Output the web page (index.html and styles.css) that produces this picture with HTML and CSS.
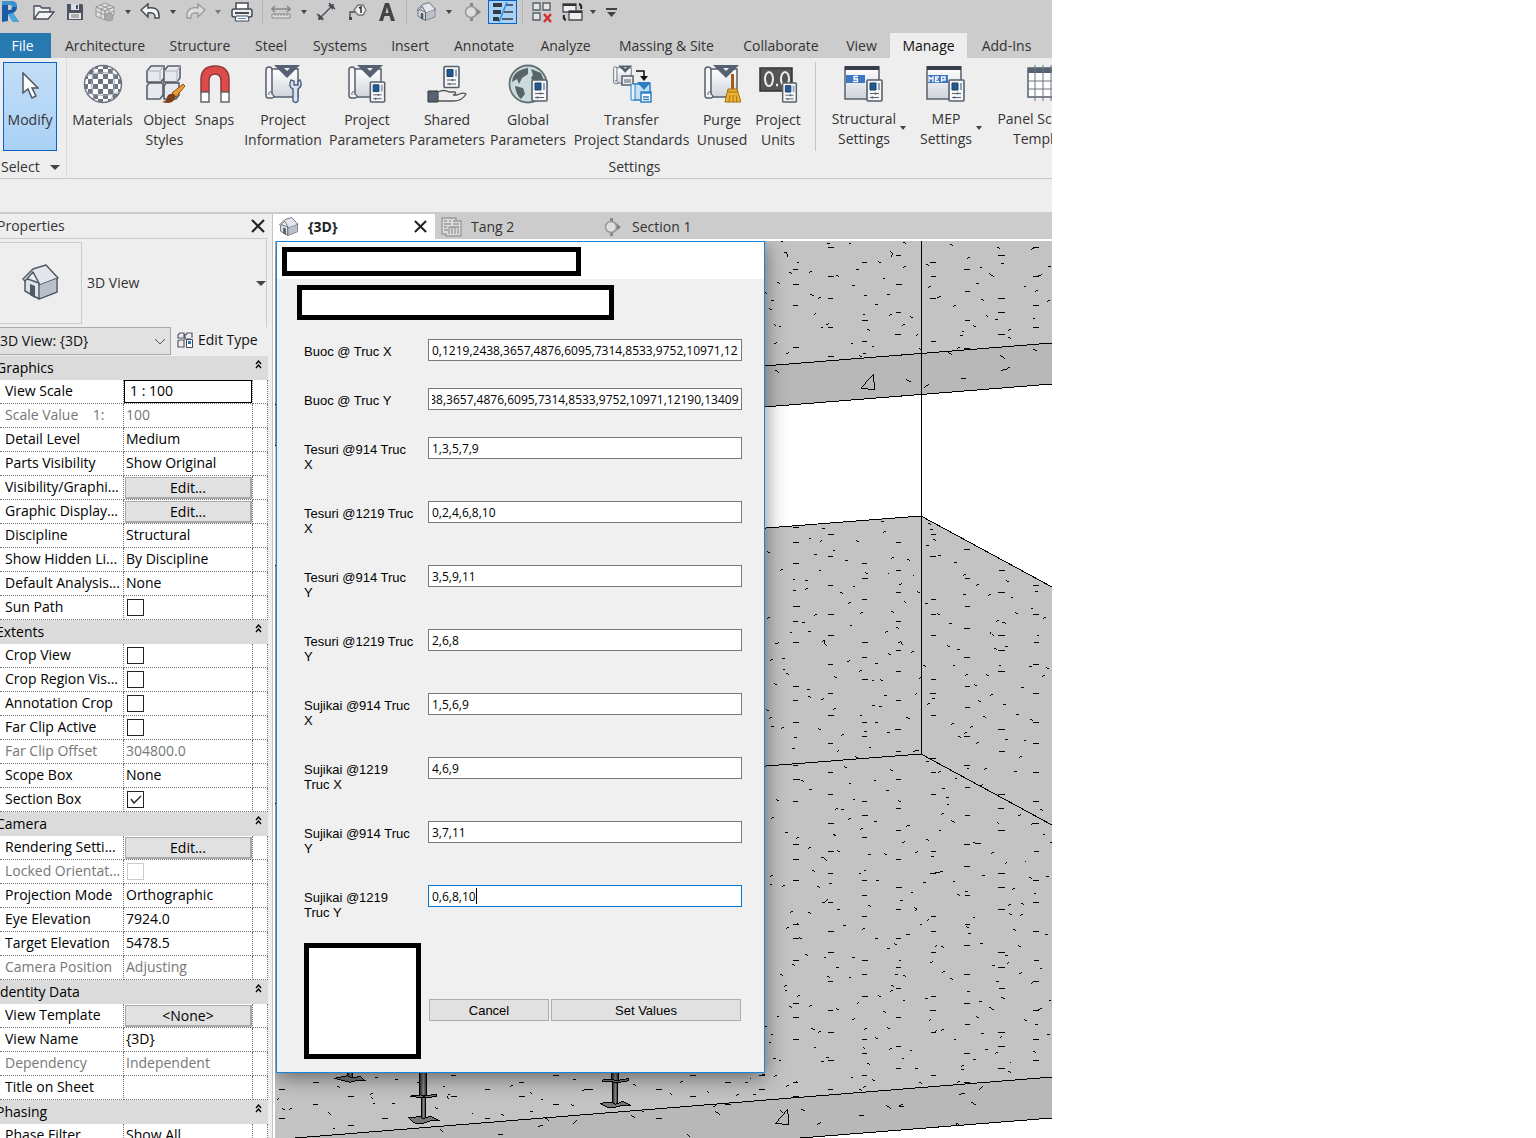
FILE: index.html
```html
<!DOCTYPE html>
<html lang="en">
<head>
<meta charset="utf-8">
<title>3D View</title>
<link rel="stylesheet" href="styles.css">
</head>
<body>
<svg class="defs" aria-hidden="true">
  <defs>
    <linearGradient id="paper" x1="0" y1="0" x2="0" y2="1"><stop offset="0" stop-color="#fff"/><stop offset="1" stop-color="#cfd4db"/></linearGradient>
    <linearGradient id="post"><stop offset="0" stop-color="#222"/><stop offset=".5" stop-color="#888"/><stop offset="1" stop-color="#222"/></linearGradient>
    <pattern id="checks" width="10" height="10" patternUnits="userSpaceOnUse"><rect width="10" height="10" fill="#fff"/><path d="M0 0h5v5H0zM5 5h5v5H5z" fill="#6b7480"/></pattern>
    <symbol id="sheet" viewBox="0 0 17 23"><rect x="1" y="1" width="15" height="21" rx="1" fill="#f4f6f8" stroke="#57606c" stroke-width="1.6"/><path d="M4 4h6v7H4z" fill="#1d5b96" stroke="#23405f"/><path d="M12 4h2v7h-2z" fill="#8fa6bd"/><path d="M4 14.500h9M4 18.500h9" stroke="#57606c"/><path d="M9.500 13.500v2M6.500 17.500v2" stroke="#57606c" stroke-width="1.500"/></symbol>
    <symbol id="scroll" viewBox="0 0 38 40"><path d="M7 5h27v28H7z" fill="url(#paper)" stroke="#57606c" stroke-width="1.500"/><path d="M2 6q0-3 3-3t3 3v24q4 3 0 4H4q-2 0-2-3z" fill="#f4f6f8" stroke="#57606c" stroke-width="1.500"/><path d="M8 28q-4-1-3 3" fill="none" stroke="#57606c"/><path d="M10 1h26L23 14z" fill="#566273"/><path d="M20 4h6l-3 3z" fill="#eee"/></symbol>
    <symbol id="house" viewBox="0 0 38 38"><path d="M3 14v13l14 8V19zM17 19v16l18-7V13z" fill="#dfe3e8" stroke="#515966" stroke-width="1.500" stroke-linejoin="round"/><path d="M1 15 11 5l13-4 12 13-18 7-7-13-8 9z" fill="#e3e6ea" stroke="#515966" stroke-width="1.500" stroke-linejoin="round"/><path d="M8 20v11l5 3V22z" fill="#515966"/><path d="m18 21 16-6v12l-16 7z" fill="#b9c0ca"/></symbol>
    <symbol id="section" viewBox="0 0 18 18"><path d="M7 0h3v18H7z" fill="#888"/><path d="m9 2 9 7-9 7z" fill="#808080"/><circle cx="8" cy="9" r="5.500" fill="#ddd" stroke="#999" stroke-width="1.500"/></symbol>
    <symbol id="window" viewBox="0 0 38 40"><path d="M1 3h34v32H1z" fill="url(#paper)" stroke="#57606c" stroke-width="1.500"/><path d="M1 2h34v4H1z" fill="#363d48"/></symbol>
    <symbol id="chevrons" viewBox="0 0 7 9"><path d="m1 4 2.500-3L6 4M1 8l2.500-3L6 8" fill="none" stroke="#000" stroke-width="1.300"/></symbol>
  </defs>
</svg>
<div class="app">
  <header>
    <div class="quick-bar">
      <button class="logo" aria-label="Application menu"><svg width="20" height="24" viewBox="0 0 20 24"><path d="M2 1h9q6 0 6 6 0 4-4 6l6 9h-6L8 14v7l-6 1z" fill="#1c5aa6"/><path d="M2 1h9q6 0 6 6H8V5H2z" fill="#3f92d2"/><path d="M8 5h2q2 0 2 2.500T10 10H8z" fill="#ccc"/><path d="m8 14 5 8h6l-6-9z" fill="#4aa5dd"/></svg></button>
      <button aria-label="Open"><svg width="22" height="18" viewBox="0 0 22 18"><path d="M1 16V3h6l2 2h8v4" fill="#eee" stroke="#444b56" stroke-width="1.300"/><path d="m1 16 5-7h15l-6 7z" fill="#f5f5f5" stroke="#444b56" stroke-width="1.300"/></svg></button>
      <button aria-label="Save"><svg width="18" height="18" viewBox="0 0 18 18"><path d="M1 1h15l1 1v15H1z" fill="#4d5562"/><path d="M5 1h8v6H5z" fill="#dde"/><path d="M10 2h2v4h-2z" fill="#4d5562"/><path d="M3 10h12v6H3z" fill="#e8e8e8"/><path d="M5 12h8M5 14h8" stroke="#777"/></svg></button>
      <button aria-label="Synchronize"><svg width="20" height="20" viewBox="0 0 20 20" fill="#ddd" stroke="#999"><path d="m1 5 9-4 9 4-9 4zM1 5v9l9 4V9zM19 5v8l-9 5V9zM5 3l9 4v9M15 3 6 7v9M1 9l9 4 9-4"/><circle cx="14" cy="15" r="4" fill="#aaa"/></svg></button>
      <button aria-label="Synchronize options"><span class="caret"></span></button>
      <button aria-label="Undo"><svg width="20" height="18" viewBox="0 0 20 18"><path d="m1 7 7-6v4q12-2 11 10h-4q1-6-7-5v4z" fill="#f6f6f6" stroke="#444b56" stroke-width="1.500"/></svg></button>
      <button aria-label="Undo list"><span class="caret"></span></button>
      <button aria-label="Redo"><svg width="20" height="18" viewBox="0 0 20 18"><path d="m19 7-7-6v4Q0 3 1 15h4q-1-6 7-5v4z" fill="#ddd" stroke="#999" stroke-width="1.300"/></svg></button>
      <button aria-label="Redo list"><span class="caret dim"></span></button>
      <button aria-label="Print"><svg width="22" height="20" viewBox="0 0 22 20"><path d="M5 1h12v7H5z" fill="#fff" stroke="#444b56" stroke-width="1.500"/><rect x="1" y="7" width="20" height="8" rx="2" fill="#eee" stroke="#444b56" stroke-width="1.500"/><path d="M4 11h14" stroke="#444b56" stroke-width="2"/><path d="M5 14h12l1 5H4z" fill="#fff" stroke="#444b56"/><path d="M7 16.500h8" stroke="#4a97cc"/></svg></button>
      <span class="rule"></span>
      <button aria-label="Measure"><svg width="20" height="14" viewBox="0 0 20 14"><path d="M1 4h18M4 1 1 4l3 3m12-6 3 3-3 3" fill="none" stroke="#888" stroke-width="1.600"/><path d="M1 9h18v4H1z" fill="#ddd" stroke="#888"/><path d="M4 9v2m3-2v2m3-2v2m3-2v2m3-2v2" stroke="#888"/></svg></button>
      <button aria-label="Measure options"><span class="caret"></span></button>
      <button aria-label="Aligned dimension"><svg width="20" height="20" viewBox="0 0 20 20"><path d="M4 16 16 4M1 12l6 6M13 1l6 6" stroke="#444b56" stroke-width="1.300"/><path d="m2 18 1-6 5 5zM18 2l-1 6-5-5z" fill="#444b56"/></svg></button>
      <button aria-label="Tag by category"><svg width="19" height="18" viewBox="0 0 19 18"><path d="M2 15V9h5" fill="none" stroke="#444b56" stroke-width="1.300"/><path d="M1 14h3v3H1z" fill="#444b56"/><path d="m6 7 4-5h5l3 5-3 5h-5z" fill="#eee" stroke="#777" stroke-width="1.300"/><path d="m11 5 2-1v6" fill="none" stroke="#333" stroke-width="1.500"/></svg></button>
      <button aria-label="Text"><svg width="16" height="20" viewBox="0 0 16 20"><path d="M0 19 6 1h4l6 18h-4l-1.500-5H5.500L4 19zM6.500 11h3L8 5z" fill="#444" fill-rule="evenodd"/></svg></button>
      <span class="rule"></span>
      <button aria-label="Default 3D view"><svg width="21" height="20"><use href="#house"/></svg></button>
      <button aria-label="3D view options"><span class="caret"></span></button>
      <button aria-label="Section"><svg width="18" height="18"><use href="#section"/></svg></button>
      <button class="on" aria-label="Thin lines"><svg width="22" height="20" viewBox="0 0 22 20"><path d="M1 3h9M1 10h8M1 17h6" stroke="#333b47" stroke-width="4"/><path d="M13 3h8M12 10h9M10 17h11" stroke="#333b47" stroke-width="1.300"/><path d="M15 0 7 20" stroke="#2f8fe8" stroke-width="1.500"/></svg></button>
      <span class="rule"></span>
      <button aria-label="Close inactive views"><svg width="20" height="21" viewBox="0 0 20 21"><path d="M1 1h7v7H1zM11 1h7v7h-7zM1 11h7v7H1z" fill="#e4e4e4" stroke="#555d69" stroke-width="1.300"/><path d="m12 12 7 8m0-8-7 8" stroke="#d42f2f" stroke-width="2.500"/></svg></button>
      <button aria-label="Switch windows"><svg width="21" height="20" viewBox="0 0 21 20"><path d="M1 2h13v8H1zM7 9h13v9H7z" fill="#eee" stroke="#444b56" stroke-width="1.300"/><path d="M1 3h13M7 10h13" stroke="#333" stroke-width="2"/><path d="M17 2q3 1 2 5M4 18q-3-1-2-5" fill="none" stroke="#222" stroke-width="2"/></svg></button>
      <button aria-label="Window list"><span class="caret"></span></button>
      <button aria-label="Customize toolbar"><svg width="11" height="9" viewBox="0 0 11 9"><path d="M0 0h11v2H0zM1 4h9L5.500 9z" fill="#444"/></svg></button>
    </div>
    <nav class="tabs">
      <a class="file" href="#">File</a><a href="#">Architecture</a><a href="#">Structure</a><a href="#">Steel</a><a href="#">Systems</a><a href="#">Insert</a><a href="#">Annotate</a><a href="#">Analyze</a><a href="#">Massing &amp; Site</a><a href="#">Collaborate</a><a href="#">View</a><a class="current" href="#">Manage</a><a href="#">Add-Ins</a>
    </nav>
    <div class="ribbon">
      <section class="panel-select">
        <button class="modify"><svg width="18" height="28" viewBox="0 0 18 28"><path d="M2 1v20l5-4 4 9 4-2-4-8h6z" fill="#fff" stroke="#50565f" stroke-width="1.500"/></svg><span>Modify</span></button>
        <button class="select">Select <span class="caret wide"></span></button>
      </section>
      <section class="panel-settings">
        <div class="tools">
          <button><svg width="40" height="40" viewBox="0 0 40 40"><circle cx="20" cy="20" r="18.500" fill="url(#checks)" stroke="#6b7480" stroke-width="1.500"/><path d="M12 3q-7 17 0 34M28 3q7 17 0 34M3 12q17-7 34 0M3 28q17 7 34 0" fill="none" stroke="#9aa2ac"/></svg><span>Materials</span></button>
          <button><svg width="40" height="40" viewBox="0 0 40 40"><path d="m2 7 4-5h13v12l-3 4H2zM19 7l4-5h12v12l-3 4H19zM2 22l2-3h14v12l-3 4H2zM19 22l2-3h13v12l-3 4H19z" fill="#e7e9ee" stroke="#57606c" stroke-width="1.600"/><path d="M2 7h13v11M19 7h13v11M15 7l3-5M32 7l3-5" fill="none" stroke="#aab0b9"/><path d="m38 20-11 9 4 4 9-11z" fill="#e99a35" stroke="#8a5210"/><path d="M17 38q5-1 5-5 2-4 6-3 4 1 2 5-4 6-13 3z" fill="#7a431b"/></svg><span>Object<br>Styles</span></button>
          <button><svg width="32" height="40" viewBox="0 0 32 40"><path d="M2 28V16Q2 2 16 2t14 14v12h-8V17q0-7-6-7t-6 7v11z" fill="#df4b4b" stroke="#8c3b3b" stroke-width="1.500"/><path d="M2 28h8v10H2zM22 28h8v10h-8z" fill="#fff" stroke="#666" stroke-width="1.500"/></svg><span>Snaps</span></button>
          <button><svg width="38" height="40" viewBox="0 0 38 40"><use href="#scroll"/><path d="M27 16q-3 7 2 9v12q3 3 5 0V25q5-3 2-9l-2 1v4h-4v-4z" fill="#dde3ec" stroke="#4a5d84" stroke-width="1.400"/></svg><span>Project<br>Information</span></button>
          <button><svg width="40" height="40" viewBox="0 0 40 40"><use href="#scroll" width="38" height="40"/><use href="#sheet" x="22" y="17" width="17" height="22"/></svg><span>Project<br>Parameters</span></button>
          <button><svg width="40" height="40" viewBox="0 0 40 40"><use href="#sheet" x="16" y="1" width="17" height="24"/><path d="M1 27h10v11H1z" fill="#566273" stroke="#333"/><path d="M11 28q6-3 11 0h6q2 2-2 3h4q6-3 9-1-4 7-12 7H11z" fill="#eee" stroke="#555" stroke-width="1.300"/></svg><span>Shared<br>Parameters</span></button>
          <button><svg width="40" height="40" viewBox="0 0 40 40"><circle cx="20" cy="20" r="18.500" fill="#c9dbdc" stroke="#627276" stroke-width="1.800"/><path d="M20 4Q5 6 4 18l5-3 2 5 3-6 6-4zM7 22l8 2 2 6-4 5q-5-4-6-13zM23 5l10 4 4 10-7-3-3 4-4-6 2-3z" fill="#596469"/><use href="#sheet" x="23" y="15" width="17" height="23"/></svg><span>Global<br>Parameters</span></button>
          <button><svg width="40" height="40" viewBox="0 0 40 40"><use href="#scroll" x="0" y="1" width="22" height="22"/><path d="M10 12h11v9H10z" fill="#eee" stroke="#57606c" stroke-width="1.500"/><path d="M12 16h7M12 18h7" stroke="#57606c"/><path d="M24 7h8v7" fill="none" stroke="#111" stroke-width="1.500"/><path d="M28 12h8l-4 5z" fill="#111"/><path d="M22 20h16v16H22z" fill="#c3e0f5" stroke="#2d7fc1" stroke-width="1.500"/><path d="M19 20h4v16h-4z" fill="#e8f5ff" stroke="#2d7fc1"/><path d="M25 18h14l-7 8z" fill="#2d7fc1"/><path d="M29 28h10v10H29z" fill="#fff" stroke="#2d7fc1" stroke-width="1.500"/><path d="M29 29h10M31 33h6M31 35.500h6" stroke="#2d7fc1" stroke-width="1.500"/></svg><span>Transfer<br>Project Standards</span></button>
          <button><svg width="38" height="40" viewBox="0 0 38 40"><use href="#scroll"/><path d="M28 10h3v15h-3z" fill="#a35c16"/><path d="m25 25 9 0 4 13H22z" fill="#edb530" stroke="#a66b12"/><path d="M25 28h10M27 31l-1 7m4-7v7m3-7 1 7" stroke="#a66b12"/></svg><span>Purge<br>Unused</span></button>
          <button><svg width="40" height="40" viewBox="0 0 40 40"><path d="M2 4h32v23H2z" fill="#555" stroke="#333" stroke-width="1.500"/><ellipse cx="11" cy="15" rx="4" ry="7" fill="none" stroke="#eee" stroke-width="2"/><path d="M18 21h2" stroke="#eee" stroke-width="2.500"/><ellipse cx="27" cy="15" rx="4" ry="7" fill="none" stroke="#eee" stroke-width="2"/><use href="#sheet" x="23" y="18" width="17" height="21"/></svg><span>Project<br>Units</span></button>
          <span class="rule"></span>
          <button class="drop"><svg width="40" height="40" viewBox="0 0 40 40"><use href="#window" width="38" height="40"/><path d="M2 11h19v8H2z" fill="#3d76c4"/><path d="M14 12.500h-4V15h3.500v2.500H9" fill="none" stroke="#fff" stroke-width="1.300"/><use href="#sheet" x="22" y="15" width="17" height="23"/></svg><span>Structural<br>Settings</span><i class="caret"></i></button>
          <button class="drop"><svg width="40" height="40" viewBox="0 0 40 40"><use href="#window" width="38" height="40"/><path d="M2 11h20v8H2z" fill="#3d76c4"/><path d="M3 18v-5l2 2 2-2v5M13 13H9.500v4.500H13M9.500 15H12M15.500 18v-5H19v3h-3" fill="none" stroke="#fff" stroke-width="1.300"/><use href="#sheet" x="22" y="15" width="17" height="23"/></svg><span>MEP<br>Settings</span><i class="caret"></i></button>
          <button class="drop"><svg width="40" height="40" viewBox="0 0 40 40"><path d="M1 4h38v29H1z" fill="#fff" stroke="#57606c" stroke-width="1.500"/><path d="M1 4h38v5H1z" fill="#566273"/><path d="M8 1v36M16 1v36M24 1v36M32 1v36M1 17h38M1 25h38" stroke="#6d7580"/></svg><span>Panel Schedule<br>Templates</span><i class="caret"></i></button>
        </div>
        <h2>Settings</h2>
      </section>
    </div>
    <div class="options"></div>
  </header>
  <main>
    <aside class="properties">
      <div class="title"><h2>Properties</h2><button aria-label="Close properties"><svg width="14" height="14" viewBox="0 0 14 14"><path d="m1 1 12 12M13 1 1 13" stroke="#222" stroke-width="2.200"/></svg></button></div>
      <button class="type"><span class="thumb"><svg width="40" height="38"><use href="#house"/></svg></span><span>3D View</span><i class="caret wide"></i></button>
      <div class="instance"><select aria-label="View"><option>3D View: {3D}</option></select><button><svg width="16" height="17" viewBox="0 0 16 17"><path d="m1 3 2-2h4v5H1zM9 3l1-2h5v5M1 9l1-1h5v7H1zM1 6h6M8 2v5h6" fill="none" stroke="#515966" stroke-width="1.200"/><path d="M9.500 7.500h6v8h-6z" fill="#fff" stroke="#445"/><path d="M11 9h3v3h-3z" fill="#2976b8"/></svg>Edit Type</button></div>
      <table>
        <colgroup><col class="name"><col class="value"><col></colgroup>
        <tbody>
          <tr class="group"><th colspan="2">Graphics</th><td><svg width="7" height="9"><use href="#chevrons"/></svg></td></tr>
          <tr><th>View Scale</th><td class="field"><input class="scale" aria-label="View Scale" value="1 : 100"></td><td></td></tr>
          <tr class="dim"><th>Scale Value &nbsp;&nbsp; 1:</th><td>100</td><td></td></tr>
          <tr><th>Detail Level</th><td>Medium</td><td></td></tr>
          <tr><th>Parts Visibility</th><td>Show Original</td><td></td></tr>
          <tr><th>Visibility/Graphi...</th><td class="field"><button>Edit...</button></td><td></td></tr>
          <tr><th>Graphic Display...</th><td class="field"><button>Edit...</button></td><td></td></tr>
          <tr><th>Discipline</th><td>Structural</td><td></td></tr>
          <tr><th>Show Hidden Li...</th><td>By Discipline</td><td></td></tr>
          <tr><th>Default Analysis...</th><td>None</td><td></td></tr>
          <tr><th><label for="sun">Sun Path</label></th><td><input id="sun" type="checkbox"></td><td></td></tr>
        </tbody>
        <tbody>
          <tr class="group"><th colspan="2">Extents</th><td><svg width="7" height="9"><use href="#chevrons"/></svg></td></tr>
          <tr><th><label for="crop">Crop View</label></th><td><input id="crop" type="checkbox"></td><td></td></tr>
          <tr><th><label for="region">Crop Region Vis...</label></th><td><input id="region" type="checkbox"></td><td></td></tr>
          <tr><th><label for="anno">Annotation Crop</label></th><td><input id="anno" type="checkbox"></td><td></td></tr>
          <tr><th><label for="far">Far Clip Active</label></th><td><input id="far" type="checkbox"></td><td></td></tr>
          <tr class="dim"><th>Far Clip Offset</th><td>304800.0</td><td></td></tr>
          <tr><th>Scope Box</th><td>None</td><td></td></tr>
          <tr><th><label for="box">Section Box</label></th><td><input id="box" type="checkbox" checked></td><td></td></tr>
        </tbody>
        <tbody>
          <tr class="group"><th colspan="2">Camera</th><td><svg width="7" height="9"><use href="#chevrons"/></svg></td></tr>
          <tr><th>Rendering Setti...</th><td class="field"><button>Edit...</button></td><td></td></tr>
          <tr class="dim"><th><label for="lock">Locked Orientat...</label></th><td><input id="lock" type="checkbox" disabled></td><td></td></tr>
          <tr><th>Projection Mode</th><td>Orthographic</td><td></td></tr>
          <tr><th>Eye Elevation</th><td>7924.0</td><td></td></tr>
          <tr><th>Target Elevation</th><td>5478.5</td><td></td></tr>
          <tr class="dim"><th>Camera Position</th><td>Adjusting</td><td></td></tr>
        </tbody>
        <tbody>
          <tr class="group"><th colspan="2">Identity Data</th><td><svg width="7" height="9"><use href="#chevrons"/></svg></td></tr>
          <tr><th>View Template</th><td class="field"><button>&lt;None&gt;</button></td><td></td></tr>
          <tr><th>View Name</th><td>{3D}</td><td></td></tr>
          <tr class="dim"><th>Dependency</th><td>Independent</td><td></td></tr>
          <tr><th>Title on Sheet</th><td></td><td></td></tr>
        </tbody>
        <tbody>
          <tr class="group"><th colspan="2">Phasing</th><td><svg width="7" height="9"><use href="#chevrons"/></svg></td></tr>
          <tr><th>Phase Filter</th><td>Show All</td><td></td></tr>
        </tbody>
      </table>
    </aside>
    <div class="workspace">
      <nav class="views">
        <div class="view current"><svg width="20" height="20"><use href="#house"/></svg><a href="#">{3D}</a><button aria-label="Close view"><svg width="13" height="13" viewBox="0 0 14 14"><path d="m1 1 12 12M13 1 1 13" stroke="#222" stroke-width="2.200"/></svg></button></div>
        <div class="view"><svg width="21" height="20" viewBox="0 0 21 20"><path d="M1 1h14v3h5v15H5v-2H1z" fill="#ddd" stroke="#999" stroke-width="1.300"/><path d="M3 4h3m2 0h2m2 0h3M3 7h7m2 0h6M3 10h3m2 0h10M3 13h4m4-3v7m3-7v7m3-7v7M8 10v7" stroke="#999" stroke-width="1.300"/></svg><a href="#">Tang 2</a></div>
        <div class="view"><svg width="18" height="18"><use href="#section"/></svg><a href="#">Section 1</a></div>
      </nav>
      <div class="canvas">
        <svg class="model" width="777" height="897" viewBox="275 241 777 897" shape-rendering="crispEdges" fill="none" stroke="#000">
          <g stroke="none">
            <path d="M275 241h777v103L275 405z" fill="#c3c3c3"/>
            <path d="M275 405 1052 343v41L275 446z" fill="#b8b8b8"/>
            <path d="m275 566 646-50 131 71v491l-777 62z" fill="#c3c3c3"/>
            <path d="m275 1140 777-63v41l-250 20H275z" fill="#b8b8b8"/>
          </g>
          <path d="m275 405 777-62M275 446l777-62M275 566l646-50 131 71M275 804l646-50 131 71M921.500 241v513M295 1138l757-61M800 1138l252-20"/>
          <g transform="translate(750 230) scale(.33333)" stroke-width="3">
            <path d="M234 52h18M438 76h16M337 97h14M540 97h17M744 76h20M849 52h17M129 118h16M642 118h17M234 139h17M543 139h14M849 139h17M129 163h17M438 163h17M646 184h14M234 205h15M540 205h17M744 205h20M129 226h15M849 226h17M438 247h15M744 247h20M337 271h16M646 271h14M234 292h15M849 292h17M435 313h18M744 313h20M337 334h14M543 334h15M129 353h17M234 379h18M642 357h17M633 445h15"/>
            <path d="M93 34h6M232 40h8M297 40h6M459 37l8 3M600 42l8 5M742 52l7 4M844 58l8-4M102 67h8l4 14M141 97h6M384 94l8 4M420 64l8 6-4 12M460 112l7-4M528 103l8 3M652 85l7-4M690 112h6M753 99l10 4M864 138l11-4M894 109h9M117 126l8 5M178 127l8-3M258 135l8 4M319 118h8M400 145h5M717 130l7 5 9 7M82 157l7 4M306 166h9M535 172l7-3M678 160h8M823 169h5M63 211h9M46 188l4 2M180 193l12 4M205 205l8-3M342 196h9M411 193h8M560 202h6l7-4M694 208l7 4M855 184l8-3M892 214l8-3M57 235l8 4M193 253l5-3M375 223h9M338 253h8M418 256l8-3M480 259l8 4M610 229l7-3M708 256l5 4M736 270l8-3M850 265h5M72 283l5 4M88 289h5M213 292h5M229 284l8-4M352 297l8 4M457 286l8-4M497 317l7-4M631 316h8M635 307l7-4M669 287l8 3M775 301l7-3M774 321l8 4M73 341l7-3M303 340h6M366 349h6M108 371l8-3M340 371h8M327 377l8 4M507 354l6 5M622 355l8-3M850 358l10 4M75 420l12 8M332 475l38-42 4 46zM468 449l15 6M523 472l13-9M594 367l12 6M750 376l14 9M752 421l14-2 13-7"/>
          </g>
          <g transform="translate(750 500) scale(.33333)" stroke-width="3">
            <path d="M129 82h17M234 103h18M543 103h15M129 127h17M438 127h15M642 148h18M234 169h15M540 169h18M129 190h17M337 190h14M438 211h15M747 211h18M337 235h17M646 235h14M234 256h15M849 256h17M438 277h15M744 277h20M337 298h14M543 298h15M129 319h20M646 319h14M234 343h18M543 343h14M849 343h17M129 364h14M438 364h15M642 385h17M234 406h17M543 406h14M744 406h20M129 427h17M337 427h17M852 427h15M438 451h15M744 451h20M337 472h14M642 472h17M234 493h15M849 493h18M438 514h15M744 514h20M337 538h17M543 538h15M129 559h17M646 559h14M234 580h15M540 580h17M849 580h17M129 601h14M438 601h15M646 622h14M234 646h17M543 646h14M129 667h17M337 667h14M849 667h17M435 688h18M744 688h20M337 709h14M642 709h18M234 730h15M849 730h17M438 754h15M747 754h18M540 775h17M129 796h15M642 796h17M234 817h15M543 817h14M849 817h17M129 838h20M438 838h15M646 862h14M234 883h15M543 883h14M744 883h20M129 904h15M337 904h14M849 904h17M438 925h15M744 925h18M337 946h17M646 946h14M234 970h17M849 970h17M438 991h15M744 991h20M337 1012h14"/>
            <path d="M216 85h8M177 115h5M209 125l8-4M318 121l8 4M400 97l8-4M394 64h8M535 69l8 4M540 90l8-3M550 118l7 4M528 136h9M51 154l8 4M193 163h8M249 151h6M424 176l7-4M472 178l9 4M285 181h8M91 211l8-3M207 211h6M345 217l8 4M413 222l4-3M489 226l4 3M612 187h8M565 167h7M129 238h5M165 241h8M166 268l8-3M129 271h8M448 254l8-3M501 274l8 4M640 226l7-3M678 256l8-4M768 241l8 4M270 277l8 3M310 259h5M295 310l7-3M462 304l6 4M525 310h9M640 283h7M715 286l7-3M783 292h6M855 276l8-3M52 355l8-3M193 346l8-3M155 367h9M330 340l8-3M424 334l7 4M561 341l10 3M795 337l8 4M843 325h5M880 355l7-3M120 397h6M174 394h9M300 376h6M439 382l7 4M406 397l8-3M597 370h8M739 364l8-4M757 366l10 4M76 430h7l5-3M217 424l7-3-1 9 8 7M444 428l8-3 6 9M720 397l5 6 7 5M591 437l8 4M414 460l8 4M484 457l8-3M733 445l6 3h3M766 439h8M861 406h6M61 481l8-4M96 475h9M292 485l7-3M375 490h9M328 514l7-3M622 448h8M519 496l9 4M609 496h6M99 508h5M109 519l8 4M252 529l8 4M366 541h6M390 539l8 4M508 535l5-3M645 526l8-4M708 523l8 4M748 496h5M837 499h9M877 529l7-3M888 502l8 4M72 550l8 4M171 568h9M174 588l8 4M213 599l8-3M402 586h8M495 583l5-3M531 613l8-4M546 595h8M672 553l8 4M721 586l7-3M813 562h9M684 601l8 4M760 613h8M48 628l8 4M57 655l8-4M250 628l7-3M331 646h5M366 616h9M387 619h9M468 652l11 4M604 673l7-4M661 682l7-4M699 649l8 3M798 643h9M840 657l8 4M63 679h9M94 685l8-3M204 685l8 4M274 706l7-3M342 694h9M375 667h9M411 697h9M624 709l8 3M642 700l8-3M765 718h9M822 721h6M132 712h9M127 745h7M261 754l6-3M357 742h6M490 755l8-4 8 1M678 730l8-3M807 773l8-4M282 799l8 4M298 780l8-3M315 769l9 5M420 808l8 4M528 786l8-3M564 817l8-3M702 808l8-3M792 814h9M650 804l8 4M372 841h6M153 840l8 4M177 868h9M297 850h6M408 871h9M575 865h9M690 858l8-4M588 892h9M614 834l7 2M78 898l8 4M255 928l8-3M273 928h9M309 898h6M445 902l9 5M591 913h5M871 928l8 4M574 943l7-3M804 947l8-3M64 955l8-3M295 958l7-3M372 964h8M468 979l11-4M604 961l12 9M740 968l8 3M842 974l9-4M331 988l8-3M106 997h8M138 1015l8-4M249 1003l8 4M567 991h6M879 1003h6"/>
          </g>
          <g transform="translate(750 830) scale(.33333)" stroke-width="3">
            <path d="M337 22h14M129 43h17M642 43h17M234 64h17M543 64h15M852 64h15M129 88h17M438 88h15M642 109h17M234 130h15M540 130h18M744 130h20M129 151h17M337 151h14M849 151h17M438 172h17M744 172h20M337 196h14M646 196h14M234 217h15M849 217h17M438 238h15M744 238h20M337 259h14M543 259h14M129 283h17M646 283h14M234 304h17M543 304h14M849 304h17M129 325h17M438 325h15M642 346h17M234 367h17M543 367h14M744 367h20M129 391h17M337 391h17M852 391h15M438 412h15M744 412h20M337 433h14M642 433h17M234 454h15M849 454h17M438 475h15M747 475h18M337 499h17M543 499h15M129 520h17M642 520h17M234 541h15M540 541h17M849 541h17M129 562h17M438 562h15M646 583h14M234 607h17M543 607h14M744 607h20M129 628h17M337 628h14M849 628h17M438 649h15M744 649h20M337 670h14M642 670h17M234 691h17M849 691h17M438 715h15M744 715h20M27 736h17M337 736h14M543 736h14M129 757h15M234 778h15M642 759h17M129 800h17"/>
            <path d="M138 25l8-4M174 55l8-3M250 13l7 4M262 62l8 4M214 82l7 2 10 10M354 75l8-3M402 70l8 4M457 38l7-3M495 68l8-3M528 27l8 4M544 79h7M670 38l8 2h14M724 70l8-3M766 100l4-3M825 94l4 4M880 13h5M901 37h5M60 139l8-3M60 163h6M97 169l8-3M187 121l7 4M202 169l8 4M237 160h8M327 130h6M342 121h6M378 151h9M484 187h5M519 157h9M556 128h8l14-4M610 154h5M697 136h9M646 184h8M622 193l8 3M787 178l8-3M838 142l8 4M888 139h9M852 190l7 3M120 247l8-3M175 247l8 3M217 219l8-3 8-8M262 238h8M355 226l8 4M451 211h8M492 233l8 4-5 5M531 271l7-3M669 262h6M775 226l7-3M777 250l8 4M811 256l8-3M813 220l8 3M109 295l8-3M140 280l5 3M147 322l10 6M279 286h9M337 298l8-3M375 325h9M469 312l10 2M510 283h6M412 355h8M432 341l8 3M555 349l6-3M574 348l8 4M649 290l8 3M655 310h7M690 340h9M790 298l8 4M886 313h8M804 346l8 4M166 373l7 4M126 403l8 3M222 382h5M258 412h9M306 382h9M447 391h5M541 398l8-4M726 406h9M770 401l6-4M766 376h8M870 415h6M91 433l7 4M231 439l8 3M297 442h6M436 433h8M460 436l7 4M576 428l8-4M600 444l8 4M808 431l8-4M102 469l8-3M105 481h6M141 499l8-4M384 496l8 4M421 484l8-3M424 466l7 4M525 505h9M651 484h8M739 454h7M754 502l10 4M844 460l8-5M897 511h5M117 529l8 3M178 529l8-3M258 536l8 3M321 521l5-4M400 544l8 4M459 511h5M687 514h9M717 532l7 2 9 8M865 540l10-5M81 559h6M306 569l8-3M537 571l5-3M678 559l8 4M822 568l8 4M855 583h8M45 589h6M63 613h6M183 595l11 3M205 607l8-4M343 598l7-3M411 592l8 4M375 622l8 4M555 605l6-3M573 602l8-4M693 610h9M751 623l6-4M891 613h9M57 637h6M193 652h5M339 653l5 3M418 658l7-3M480 661h6M612 628h6M705 658h9M735 671l8-4M850 664l7 4M69 685h9M88 691h5M214 694l8-1M229 682l8 1M352 699l7 5M457 685h5M495 715h9M633 718h8M634 709l7-4M669 688h9M779 700l4-3M775 723l7 4M0 745h3M73 739l7-3M303 742h6M366 748l8 4M508 757l7 4M622 757l8-3M108 769l8-3M138 754l5 4M327 777l8 4M340 772l7-3M9 793h9M76 881l37-43 3 45zM90 841l10 10M153 838l11 4M202 884l10-6M327 858l14-2M408 825l14 10M460 822l-14 7h15M628 793l16-3M664 817l13 7M688 779l10-9M618 886l3-8 5 8"/>
          </g>
          <g transform="translate(270 860) scale(.33333)" stroke-width="3">
            <path d="M27 688h18M27 775h18M129 667h18M234 709h18M129 733h16M337 775h16M234 796h17M440 667h14M543 646h14M646 688h14M543 709h17M646 775h14M543 796h14M747 709h18M747 667h15M850 733h17M1057 733h17M1158 688h17M1158 775h17M1260 709h17M1365 667h17M1365 733h17M1468 688h17M1260 646h17M850 646h17"/>
            <path d="M22 718l5-4M37 745l8 6M57 748l8-4M174 757l8 6M202 679l8 4M188 803l7 4M300 703l8-3M303 712l6 4M315 652h8M310 730l6 3M375 658h9M366 730h9M520 679l6 3M540 704q-12 0-5 12M495 742l9 5M606 762l4-3M694 762l7 4M720 679l10-3M780 697l6 3M813 720l7-2M780 754h9M910 658l9 2M937 692l9-4h24M903 733l8 5M1090 673l8 4M1115 754h8M1200 701l7 4M1230 667l10-4M1310 694l6 4M1398 706l9-4M1425 667h8M1475 645h9M1330 740l7-3M510 807l8 8M804 800l14-4M684 824h14M820 771l18 11M910 790l11-10M1083 766l12 8M1250 822l10 8M1335 754l14 9"/>
            <g fill="#777"><path d="M232 636h17v22h-17z" fill="url(#post)"/><path d="m193 655 40-8 13 7 23-5 18 14-27-1-20 5z"/><path d="M449 636h22v70h-22z" fill="url(#post)"/><path d="M454 710h14v70h-14z" fill="url(#post)"/><path d="m422 707 30-2 8 4 40-7v7l-38 5-10-2-30-2z"/><path d="m415 773 37-3 8 6 22-8 27 15-26-1-23 8-27-1z"/><path d="M1025 636h22v28h-22z" fill="url(#post)"/><path d="M1028 665h16v70h-16z" fill="url(#post)"/><path d="m998 660 30-2 10 4 38-6v6l-36 6-11-2-31-1z"/><path d="m991 730 36-4 8 7 24-9 25 13-26-1-23 6-26-1z"/></g>
          </g>
        </svg>
        <form class="dialog">
          <div class="caption"><div class="blank"></div></div>
          <div class="body">
            <div class="blank"></div>
            <div class="fields">
              <label for="f1">Buoc @ Truc X</label><input id="f1" value="0,1219,2438,3657,4876,6095,7314,8533,9752,10971,12190,13409">
              <label for="f2">Buoc @ Truc Y</label><input id="f2" value="0,1219,2438,3657,4876,6095,7314,8533,9752,10971,12190,13409">
              <label for="f3">Tesuri @914 Truc X</label><input id="f3" value="1,3,5,7,9">
              <label for="f4">Tesuri @1219 Truc X</label><input id="f4" value="0,2,4,6,8,10">
              <label for="f5">Tesuri @914 Truc Y</label><input id="f5" value="3,5,9,11">
              <label for="f6">Tesuri @1219 Truc Y</label><input id="f6" value="2,6,8">
              <label for="f7">Sujikai @914 Truc X</label><input id="f7" value="1,5,6,9">
              <label for="f8">Sujikai @1219 Truc X</label><input id="f8" value="4,6,9">
              <label for="f9">Sujikai @914 Truc Y</label><input id="f9" value="3,7,11">
              <label for="f10">Sujikai @1219 Truc Y</label><div class="active"><input id="f10" value="0,6,8,10"><span></span></div>
            </div>
            <div class="actions"><div class="blank"></div><button type="button">Cancel</button><button type="button">Set Values</button></div>
          </div>
        </form>
      </div>
    </div>
  </main>
</div>
<script src="app.js"></script>
</body>
</html>
```
FILE: app.js
```js
// The second step list shows its last values.
const steps = document.getElementById("f2");
steps.scrollLeft = steps.scrollWidth;
```
FILE: styles.css
```css
* { box-sizing: border-box; }
body { margin: 0; background: #fff; color: #333; font: 14px/20px "Open Sans", "Noto Sans", sans-serif; }
button { margin: 0; padding: 0; border: 0; background: none; color: inherit; font: inherit; }
input, select { margin: 0; color: inherit; font: inherit; border-radius: 0; }
a { color: inherit; text-decoration: none; }
h2 { margin: 0; font: inherit; }
svg { display: block; flex: none; }
.defs { position: absolute; width: 0; height: 0; }
.app { display: flex; flex-direction: column; width: 100%; max-width: 1052px; height: 100vh; overflow: hidden; background: #eee; }
.caret { width: 0; height: 0; border: 3px solid transparent; border-top: 4px solid #444; border-bottom: 0; }
.caret.wide { border-width: 5px 5px 0; }
.caret.dim { border-top-color: #777; }

.quick-bar { display: grid; height: 33px; padding-bottom: 9px; background: #ccc;
  grid-template-columns: 24px 40px 22px 37px 10px 34px 12px 33px 12px 35px 6px 32px 14px 30px 33px 26px 13px 27px 17px 30px 31px 8px 32px 29px 11px 26px; }
.quick-bar > * { display: flex; align-items: center; justify-content: center; }
.quick-bar .logo { justify-content: flex-start; }
.quick-bar .on { margin: 0 1px; border: 1px solid #0a64c8; background: #a9d1f5; }
.rule { width: 1px; background: #b4b4b4; justify-self: center; }
.tabs { display: grid; height: 25px; background: #ccc; line-height: 25px; text-align: center; white-space: nowrap;
  grid-template-columns: 51px 108px 82px 60px 78px 62px 86px 77px 125px 104px 57px 77px 79px; }
.tabs .file { padding-right: 6px; background: #2879b2; color: #fff; }
.tabs .current { background: #eee; color: #111; }

.ribbon { display: flex; height: 121px; border-bottom: 1px solid #c6c6c6; }
.panel-select { display: flex; flex: none; flex-direction: column; width: 67px; padding: 4px 0 0 3px; border-right: 1px solid #dcdcdc; }
.modify { display: flex; flex: none; flex-direction: column; align-items: center; gap: 10px; width: 54px; height: 89px; padding-top: 9px; border: 1px solid #0a64c8; background: linear-gradient(#c3def6, #a9d1f5); }
.select { display: flex; align-items: center; gap: 10px; height: 20px; margin: 6px 0 0 -2px; }
.panel-settings { flex: none; width: 1138px; padding: 4px 0 0 3px; }
.tools { display: grid; height: 95px; line-height: 20px; white-space: nowrap;
  grid-template-columns: 65px 59px 41px 96px 72px 88px 74px 133px 48px 64px 10px 88px 76px 126px; }
.tools button { position: relative; display: flex; flex-direction: column; align-items: center; gap: 6px; padding-top: 2px; }
.tools .rule { margin-bottom: 6px; justify-self: center; background: #c6c6c6; }
.tools .drop { gap: 5px; }
.tools .drop .caret { position: absolute; right: 2px; top: 64px; }
.panel-settings h2 { padding-right: 6px; text-align: center; }
.options { height: 33px; }

main { display: flex; flex: 1; min-height: 0; border-top: 2px solid #ccc; }
.properties { flex: none; width: 273px; padding-right: 5px; border-right: 1px solid #c4c4c4; overflow: hidden; }
.title { display: flex; align-items: center; justify-content: space-between; height: 25px; padding-right: 2px; border-bottom: 1px solid #ccc; }
.title h2 { margin-left: -3px; }
.type { display: flex; align-items: center; gap: 5px; width: 100%; height: 88px; padding: 3px 0; border-right: 1px solid #ccc; text-align: left; }
.type .thumb { display: flex; flex: none; align-items: center; justify-content: center; width: 82px; height: 82px; border: 1px solid #ccc; border-left: 0; }
.type .caret { margin-left: auto; }
.instance { display: flex; gap: 6px; height: 29px; color: #111; }
.instance select { appearance: none; width: 172px; height: 28px; margin-left: -1px; padding: 0; border: 1px solid #aaa; background: #e1e1e1 url("data:image/svg+xml,%3Csvg xmlns='http://www.w3.org/2000/svg' width='10' height='6'%3E%3Cpath d='m0 0 5 5 5-5' fill='none' stroke='%23555'/%3E%3C/svg%3E") no-repeat 155px 11px; }
.instance button { display: flex; align-items: center; gap: 5px; height: 26px; white-space: nowrap; }
.properties table { width: 268px; border-collapse: separate; border-spacing: 0; table-layout: fixed; background: #fff; color: #000; }
col.name { width: 124px; }
col.value { width: 129px; }
.properties tr { height: 24px; }
.properties th, .properties td { height: 24px; padding: 0 0 2px 2px; border: 0 dotted #777; border-width: 0 1px 1px 0; font-weight: 400; line-height: 20px; text-align: left; white-space: nowrap; }
.properties th { padding-left: 5px; }
.properties .group th, .properties .group td { border: 0; background: #dbdbdb; }
.properties .group th { padding: 0; text-indent: -4px; }
.properties .group td { padding: 0 0 7px 2px; }
.properties .dim { color: #777; }
.properties .field { padding: 0; }
.field button { display: block; width: 127px; height: 22px; margin: 1px 0 0 1px; border: 1px solid #aaa; border-width: 1px 2px 2px 1px; background: #e1e1e1; line-height: 19px; }
.field .scale { display: block; width: 128px; height: 23px; padding: 0 5px 2px; border: 1px solid #000; background: #fff; }
input[type="checkbox"] { appearance: none; display: block; width: 17px; height: 17px; margin: 2px 0 0 1px; border: 1px solid #222; background: #fff; }
input[type="checkbox"]:checked { background: url("data:image/svg+xml,%3Csvg xmlns='http://www.w3.org/2000/svg' width='15' height='15'%3E%3Cpath d='m3 7 3 4 7-7' fill='none' stroke='%23333' stroke-width='1.500'/%3E%3C/svg%3E"); }
input[type="checkbox"]:disabled { border-color: #ccc; }

.workspace { display: flex; flex: 1; flex-direction: column; min-width: 0; background: #fff; }
.views { display: grid; flex: none; grid-template-columns: 162px 160px 1fr; height: 25px; background: #ccc; }
.view { display: flex; align-items: center; gap: 9px; padding-left: 6px; }
.view.current { margin-bottom: -2px; padding: 0 8px 2px 6px; background: #fff; color: #222; font-weight: 700; }
.view button { margin-left: auto; }
.view:last-child { padding-left: 8px; gap: 11px; }
.canvas { position: relative; flex: 1; margin: 2px 0 0 2px; overflow: hidden; }
.dialog { position: absolute; left: 1px; top: 0; width: 489px; height: 832px; border: 1px solid #1883d7; background: #f0f0f0; box-shadow: 0 4px 20px rgba(0, 0, 0, .5); color: #000; font: 13px/15px "Liberation Sans", Arial, sans-serif; }
.blank { border: 5px solid #000; background: #fff; }
.caption { height: 37px; padding: 5px; background: #fff; }
.caption .blank { width: 299px; height: 29px; }
.body { padding: 6px 22px 0 27px; }
.body > .blank { width: 317px; height: 35px; margin-left: -7px; }
.fields { display: grid; grid-template-columns: 124px 1fr; grid-template-rows: 49px 49px repeat(8, 64px); margin-top: 19px; }
.fields label { width: 112px; padding-top: 5px; }
.fields input { width: 100%; height: 22px; padding: 0 2px 0 3px; border: 1px solid #7a7a7a; background: #fff; font: 12px/18px "Open Sans", "Noto Sans", sans-serif; }
.active { position: relative; }
.fields .active input { border-color: #0078d7; }
.active span { position: absolute; left: 48px; top: 3px; width: 1px; height: 16px; background: #000; }
.actions { display: grid; grid-template-columns: 117px 120px 190px; align-items: end; column-gap: 2px; margin-top: -6px; }
.actions .blank { height: 116px; }
.actions button { height: 22px; margin: 0 -6px 38px 6px; border: 1px solid #adadad; background: #e1e1e1; }
```
